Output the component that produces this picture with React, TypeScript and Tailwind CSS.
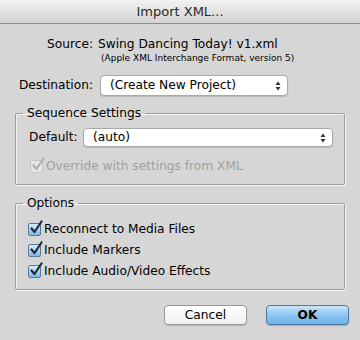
import React from 'react'

const font = { fontFamily: '"DejaVu Sans", "Liberation Sans", sans-serif' }

function Arrows() {
  return (
    <svg width="6" height="10" viewBox="0 0 6 10" className="shrink-0">
      <path d="M3 0.5 L5.5 4 L0.5 4 Z" fill="#333" />
      <path d="M3 9.5 L5.5 6 L0.5 6 Z" fill="#333" />
    </svg>
  )
}

function Select({ value, className }: { value: string; className: string }) {
  return (
    <div
      className={`flex items-center justify-between rounded-[4px] border border-[#a9a9a9] bg-white pl-[9px] pr-[6px] shadow-[0_1px_1px_rgba(0,0,0,0.15)] ${className}`}
    >
      <span>{value}</span>
      <Arrows />
    </div>
  )
}

function Check({ disabled }: { disabled?: boolean }) {
  return (
    <span
      className={`relative mr-[3px] inline-block h-[13px] w-[13px] shrink-0 rounded-[2px] border ${
        disabled
          ? 'border-[#c4c4c4] bg-[#e6e6e6]'
          : 'border-[#5a7896] bg-gradient-to-b from-[#d9ecfb] to-[#7fb6e6]'
      }`}
    >
      <svg width="15" height="15" viewBox="0 0 15 15" className="absolute -top-[4px] left-[0px]">
        <path
          d="M2.5 8.5 L5.5 12 L12.5 1.5"
          fill="none"
          stroke={disabled ? '#b0b0b0' : '#1f2b3a'}
          strokeWidth="2.2"
          strokeLinecap="round"
          strokeLinejoin="round"
        />
      </svg>
    </span>
  )
}

function Group({ title, children, className }: { title: string; children: React.ReactNode; className?: string }) {
  return (
    <fieldset
      className={`mx-[15px] rounded-[2px] border border-[#9d9d9d] shadow-[1px_1px_0_#f6f6f6,inset_1px_1px_0_#f6f6f6] ${className ?? ''}`}
    >
      <legend className="ml-[7px] px-[4px] text-[12.2px] leading-[16px] text-black">{title}</legend>
      {children}
    </fieldset>
  )
}

export default function App() {
  return (
    <div className="h-[340px] w-[360px] overflow-hidden bg-[#d6d6d6] text-[12.2px] text-black" style={font}>
      <div className="flex h-[24px] items-center justify-center border-b border-[#8c8c8c] bg-gradient-to-b from-[#f2f2f2] to-[#d4d4d4] text-[13px] text-[#2a2a2a]">
        Import XML...
      </div>

      <div className="mt-[12px] flex items-center leading-[16px]">
        <span className="w-[93px] text-right">Source:</span>
        <span className="ml-[5px]">Swing Dancing Today! v1.xml</span>
      </div>
      <div className="ml-[101px] mt-[0px] text-[9px] leading-[12px]">(Apple XML Interchange Format, version 5)</div>

      <div className="mt-[11px] flex items-center">
        <span className="w-[93px] text-right">Destination:</span>
        <Select value="(Create New Project)" className="ml-[7px] h-[21px] w-[188px]" />
      </div>

      <Group title="Sequence Settings" className="mt-[9px] h-[80px] pt-[7px]">
        <div className="flex items-center pl-[13px]">
          <span className="w-[54px]">Default:</span>
          <Select value="(auto)" className="h-[19px] w-[250px]" />
        </div>
        <div className="mt-[10px] flex items-center pl-[14px] text-[#a0a0a0]">
          <Check disabled />
          <span>Override with settings from XML</span>
        </div>
      </Group>

      <Group title="Options" className="mt-[10px] h-[95px] pt-[10px]">
        <div className="flex flex-col gap-[5px] pl-[12px] leading-[16px]">
          <div className="flex items-center">
            <Check />
            <span>Reconnect to Media Files</span>
          </div>
          <div className="flex items-center">
            <Check />
            <span>Include Markers</span>
          </div>
          <div className="flex items-center">
            <Check />
            <span>Include Audio/Video Effects</span>
          </div>
        </div>
      </Group>

      <div className="mt-[15px] flex justify-end gap-[19px] pr-[11px]">
        <button className="h-[20px] w-[83px] rounded-[4px] border border-[#9a9a9a] bg-gradient-to-b from-white to-[#f0f0f0] text-[12.2px] leading-none shadow-[0_1px_1px_rgba(0,0,0,0.15)]">
          Cancel
        </button>
        <button className="h-[20px] w-[83px] rounded-[4px] border border-[#4f77a6] bg-gradient-to-b from-[#cde6fa] via-[#8cc4f2] to-[#6fb3ec] text-[12.2px] font-bold leading-none shadow-[0_1px_1px_rgba(0,0,0,0.2)]">
          OK
        </button>
      </div>
    </div>
  )
}
